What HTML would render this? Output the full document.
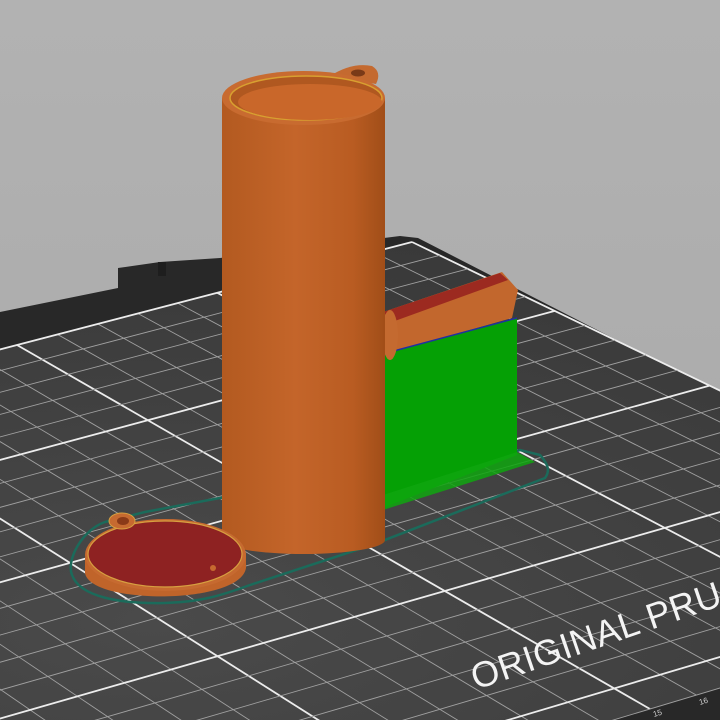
<!DOCTYPE html>
<html><head><meta charset="utf-8"><style>
html,body{margin:0;padding:0;width:720px;height:720px;overflow:hidden;background:#aaa}
svg{display:block}
</style></head><body>
<svg id="s" width="720" height="720" viewBox="0 0 720 720" xmlns="http://www.w3.org/2000/svg">
<defs>
<linearGradient id="bg" x1="0" y1="0" x2="0" y2="1"><stop offset="0" stop-color="#b2b2b2"/><stop offset="1" stop-color="#a8a8a8"/></linearGradient>
<linearGradient id="cyl" x1="0" y1="0" x2="1" y2="0"><stop offset="0" stop-color="#b35a20"/><stop offset="0.45" stop-color="#c4652a"/><stop offset="0.8" stop-color="#b95c22"/><stop offset="1" stop-color="#a14e18"/></linearGradient>
<radialGradient id="pl" cx="0.45" cy="0.55" r="0.7"><stop offset="0" stop-color="#4a4a4a"/><stop offset="1" stop-color="#353535"/></radialGradient>
</defs>
<rect width="720" height="720" fill="url(#bg)"/>
<polygon points="0,312 118,288 118,268 160,262 220,258 400,236 418,238 720,393 720,720 0,720" fill="#282828"/>
<rect x="158" y="262" width="8" height="14" fill="#1e1e1e"/>
<g id="grid"></g>
<text x="0" y="0" transform="translate(476,690) rotate(-19)" font-family="Liberation Sans, sans-serif" font-size="36" fill="#f4f4f4" letter-spacing="0.5">ORIGINAL PRUSA</text>
<text x="0" y="0" transform="translate(654,717) rotate(-17)" font-family="Liberation Sans, sans-serif" font-size="8" fill="#cfcfcf">15</text>
<text x="0" y="0" transform="translate(700,705) rotate(-17)" font-family="Liberation Sans, sans-serif" font-size="8" fill="#cfcfcf">16</text>
<path d="M105,522 C82,530 66,560 72,575 C80,597 120,604 165,603 C200,602 220,596 250,585 L372,545 L545,478 C551,470 547,463 540,455 L520,450 L383,495 L225,497 L145,512 Z" fill="none" stroke="#1b6b5b" stroke-width="2.5"/>
<polygon points="383,350 517,318 517,455 383,508" fill="#05a005"/>
<polygon points="383,495 517,452 535,462 383,510" fill="#0fa60f" opacity="0.85"/>
<polygon points="383,312 502,272 518,290 512,318 392,352 383,345" fill="#c2672d"/>
<polygon points="383,312 500,273 508,280 392,322" fill="#9c2a20"/>
<line x1="390" y1="352" x2="517" y2="318" stroke="#2030a0" stroke-width="1.5"/>
<ellipse cx="390" cy="335" rx="8" ry="25" fill="#c46a30"/>
<rect x="222" y="98" width="163" height="442" fill="url(#cyl)"/>
<ellipse cx="303.5" cy="540" rx="81.5" ry="14" fill="url(#cyl)"/>
<path d="M330,76 Q352,62 372,66 Q382,72 376,84 Z" fill="#c46a30"/>
<ellipse cx="358" cy="73" rx="7" ry="3.5" fill="#7a3a18"/>
<ellipse cx="303.5" cy="98" rx="81.5" ry="27" fill="#c86b30"/>
<ellipse cx="306" cy="98" rx="76" ry="22" fill="#b05820" stroke="#d8a030" stroke-width="1.5"/>
<ellipse cx="310" cy="102" rx="72" ry="18" fill="#c9672a"/>
<path d="M85,558 L85,573 C90,605 240,605 246,568 L246,553 Z" fill="#c0642a"/>
<ellipse cx="165.5" cy="555" rx="80.5" ry="36" fill="#c66a30"/>
<ellipse cx="165" cy="554" rx="77" ry="33" fill="#8e2222" stroke="#d7a040" stroke-width="1.2"/>
<ellipse cx="122" cy="521" rx="13" ry="8" fill="#c66a30" stroke="#d7a040" stroke-width="1"/>
<ellipse cx="123" cy="521" rx="6" ry="4" fill="#8a3a18"/>
<circle cx="213" cy="568" r="3" fill="#c66a30"/>
</svg>
<script>
(function(){
var src=[[150,0],[250,0],[250,210],[150,210]];
var dst=[[17,345],[412,242],[1100,574],[650,709]];
var A=[],b=[];
for(var i=0;i<4;i++){var x=src[i][0],y=src[i][1],X=dst[i][0],Y=dst[i][1];
A.push([x,y,1,0,0,0,-x*X,-y*X]);b.push(X);A.push([0,0,0,x,y,1,-x*Y,-y*Y]);b.push(Y);}
for(var c=0;c<8;c++){var p=c;for(var r=c+1;r<8;r++)if(Math.abs(A[r][c])>Math.abs(A[p][c]))p=r;
var t=A[c];A[c]=A[p];A[p]=t;t=b[c];b[c]=b[p];b[p]=t;
for(var r=0;r<8;r++){if(r==c)continue;var f=A[r][c]/A[c][c];for(var k=c;k<8;k++)A[r][k]-=f*A[c][k];b[r]-=f*b[c];}}
var h=[];for(var i=0;i<8;i++)h.push(b[i]/A[i][i]);
function P(u,v){var w=h[6]*u+h[7]*v+1;return [(h[0]*u+h[1]*v+h[2])/w,(h[3]*u+h[4]*v+h[5])/w];}
var g=document.getElementById('grid'),s='';
var c0=P(0,0),c1=P(250,0),c2=P(250,210),c3=P(0,210);
s+='<polygon points="'+[c0,c1,c2,c3].map(function(p){return p.join(',')}).join(' ')+'" fill="url(#pl)"/>';
for(var i=0;i<=25;i++){var u=i*10,a=P(u,0),e=P(u,210),maj=i%5==0;
s+='<line x1="'+a[0]+'" y1="'+a[1]+'" x2="'+e[0]+'" y2="'+e[1]+'" stroke="'+(maj?'#ececec':'#a0a0a0')+'" stroke-width="'+(maj?1.8:0.9)+'"/>';}
for(var j=0;j<=21;j++){var v=j*10,a=P(0,v),e=P(250,v),maj=j%5==0;
s+='<line x1="'+a[0]+'" y1="'+a[1]+'" x2="'+e[0]+'" y2="'+e[1]+'" stroke="'+(maj?'#ececec':'#a0a0a0')+'" stroke-width="'+(maj?1.8:0.9)+'"/>';}
g.innerHTML=s;
})();
</script>
</body></html>
